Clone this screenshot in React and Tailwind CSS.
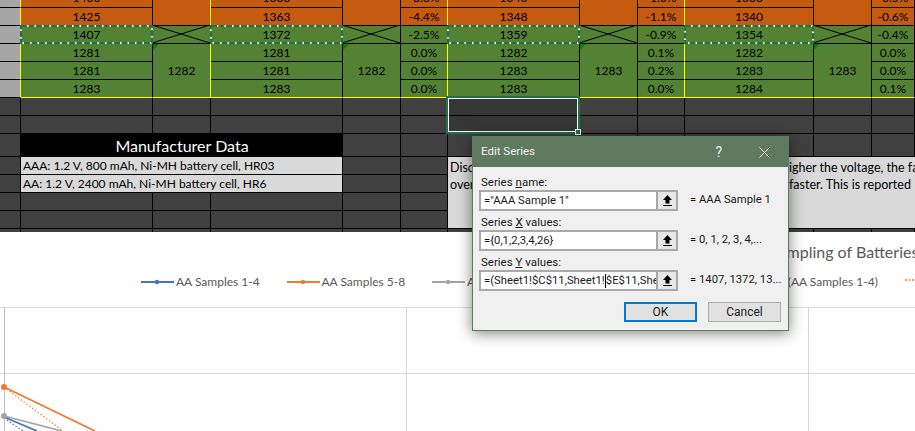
const ORANGE = "bg-[#c55a11]";
const GREEN = "bg-[#548235]";

const rows = [
  { bg: ORANGE, vals: ["1400", "1333", "-3.8%", "1340", "-1.0%", "1333", "-0.5%"] },
  { bg: ORANGE, vals: ["1425", "1363", "-4.4%", "1348", "-1.1%", "1340", "-0.6%"] },
  { bg: GREEN, vals: ["1407", "1372", "-2.5%", "1359", "-0.9%", "1354", "-0.4%"], ants: true },
  { bg: GREEN, vals: ["1281", "1281", "0.0%", "1282", "0.1%", "1282", "0.0%"] },
  { bg: GREEN, vals: ["1281", "1281", "0.0%", "1283", "0.2%", "1283", "0.0%"] },
  { bg: GREEN, vals: ["1283", "1283", "0.0%", "1283", "0.0%", "1284", "0.1%"], last: true },
];

// average shown in the merged column following each pair
const averages = ["1282", "1282", "1283", "1283"];

const Marching = ({ w }) => (
  <svg width={w} height="19" className="absolute -left-px -top-px z-10">
    <rect x="1" y="1" width={w - 2} height="17" fill="none" stroke="#fff" strokeWidth="2" />
    <rect x="1" y="1" width={w - 2} height="17" fill="none" stroke="#217346" strokeWidth="2" strokeDasharray="6 1.5" />
  </svg>
);

const Crossed = () => (
  <svg className="absolute -left-px -top-px z-0 w-[calc(100%+1px)] h-[19px]" viewBox="0 0 58 19" preserveAspectRatio="none">
    <path d="M0 0L58 18M0 18L58 0" stroke="#000" strokeWidth="1" fill="none" />
  </svg>
);

const ErrorMark = () => (
  <svg width="6" height="6" className="absolute left-0 top-0">
    <polygon points="0,0 6,0 0,6" fill="#0a7d0a" />
  </svg>
);

function Cell({ children, className = "" }) {
  return (
    <div className={`relative flex items-center justify-center border-r border-b border-black ${className}`}>
      {children}
    </div>
  );
}

function DataRow({ row, index }) {
  const edge = row.last ? "border-b-[#ffff00]" : "";
  const cell = `${row.bg} ${edge}`;
  const [a, b, c, d, e, f, g] = row.vals;

  const merged = (i) => {
    if (index === 0) return <Cell className={`${ORANGE} row-span-2 ${i === 0 ? "border-r-[#ffff00]" : ""}`} />;
    if (index === 2) {
      return (
        <Cell className={`${GREEN} ${i === 0 ? "border-r-[#ffff00]" : ""}`}>
          <Crossed />
        </Cell>
      );
    }
    if (index === 3) {
      return (
        <Cell className={`${GREEN} row-span-3 border-b-[#ffff00] ${i === 0 ? "border-r-[#ffff00]" : ""}`}>
          <ErrorMark />
          {averages[i]}
        </Cell>
      );
    }
    return null;
  };

  return (
    <>
      <Cell className="bg-[#a6a6a6] border-r-[#ffff00]" />
      <Cell className={cell}>{row.ants && <Marching w={133} />}{a}</Cell>
      {merged(0)}
      <Cell className={cell}>{row.ants && <Marching w={133} />}{b}</Cell>
      {merged(1)}
      <Cell className={`${cell} border-r-[#ffff00]`}>{c}</Cell>
      <Cell className={cell}>{row.ants && <Marching w={133} />}{d}</Cell>
      {merged(2)}
      <Cell className={`${cell} border-r-[#ffff00]`}>{e}</Cell>
      <Cell className={cell}>{row.ants && <Marching w={130} />}{f}</Cell>
      {merged(3)}
      <Cell className={cell}>{g}</Cell>
    </>
  );
}

const Dark = ({ className = "" }) => <Cell className={`bg-[#404040] ${className}`} />;

const DarkRow = () => (
  <>
    {Array.from({ length: 12 }, (_, i) => (
      <Dark key={i} />
    ))}
  </>
);

function Sheet() {
  return (
    <div className="h-[232px] overflow-hidden bg-[#404040]">
      <div className="relative -mt-[11px] grid grid-cols-[21px_132px_58px_132px_58px_47px_132px_58px_47px_129px_58px_43px] grid-rows-[19px_18px_18px_18px_18px_18px_18px_18px_23px_18px_18px_18px_18px_18px] text-[12px] leading-none text-black">
        {rows.map((row, i) => (
          <DataRow key={i} row={row} index={i} />
        ))}
        <DarkRow />
        <DarkRow />

        <Dark />
        <div className="col-span-3 flex items-center justify-center bg-black text-[16px] text-white">Manufacturer Data</div>
        <Dark />
        <Dark />
        <Dark />
        <Dark />
        <Dark />
        <Dark />
        <Dark />
        <Dark />

        <Dark />
        <div className="col-span-3 flex items-center border-r border-b border-black bg-[#d9d9d9] pl-[2px]">AAA: 1.2 V, 800 mAh, Ni-MH battery cell, HR03</div>
        <Dark />
        <Dark />
        <div className="col-span-6 row-span-4 overflow-hidden whitespace-nowrap border-b border-black bg-[#d9d9d9] pl-[2px] pt-[2px] text-[12.5px] leading-[17px]">
          <div className="flex">
            <span className="w-[332px] shrink-0">Discharge</span>
            <span>higher the voltage, the fa</span>
          </div>
          <div className="flex">
            <span className="w-[339px] shrink-0">over</span>
            <span>faster. This is reported</span>
          </div>
        </div>

        <Dark />
        <div className="col-span-3 flex items-center border-r border-b border-black bg-[#d9d9d9] pl-[2px]">AA: 1.2 V, 2400 mAh, Ni-MH battery cell, HR6</div>
        <Dark />
        <Dark />

        {[0, 1].map((r) => (
          <div key={r} className="contents">
            <Dark />
            <Dark />
            <Dark />
            <Dark />
            <Dark />
            <Dark />
          </div>
        ))}

        <DarkRow />

        {/* selected range */}
        <div className="absolute left-[446px] top-[107px] h-[38px] w-[134px] border-2 border-[#217346]">
          <div className="h-full w-full border border-white bg-black/15" />
          <div className="absolute -bottom-[3px] -right-[3px] h-[6px] w-[6px] border border-white bg-[#217346]" />
        </div>
      </div>
    </div>
  );
}

const LegendKey = ({ color }) => (
  <svg width="33" height="6" className="mr-[2px] shrink-0">
    <line x1="0" y1="3" x2="33" y2="3" stroke={color} strokeWidth="2" />
    <circle cx="16" cy="3" r="2.2" fill={color} />
  </svg>
);

function Chart() {
  return (
    <div className="h-[199px] overflow-hidden bg-white text-[#595959]">
      <div className="h-[37px] whitespace-nowrap pl-[770px] pt-[10px] text-[16px] leading-5">Sampling of Batteries</div>
      <div className="flex h-[38px] items-start whitespace-nowrap pl-[141px] pt-[5px] text-[12px] leading-[15px]">
        <div className="flex w-[146px] items-center"><LegendKey color="#4472c4" />AA Samples 1-4</div>
        <div className="flex w-[146px] items-center"><LegendKey color="#ed7d31" />AA Samples 5-8</div>
        <div className="flex w-[146px] items-center"><LegendKey color="#a5a5a5" />AAA Samples 1-4</div>
        <div className="ml-[175px] w-[153px]">Linear (AA Samples 1-4)</div>
        <svg width="10" height="15" className="shrink-0">
          <line x1="0" y1="6" x2="10" y2="6" stroke="#ed7d31" strokeWidth="1.5" strokeDasharray="2 1.5" />
        </svg>
      </div>
      <svg width="915" height="124" className="block">
        <path d="M0 0.5H915M0 66.5H915M406.5 0V124M808.5 0V124" stroke="#d9d9d9" fill="none" />
        <path d="M4.5 0V124" stroke="#bfbfbf" fill="none" />
        <line x1="4" y1="80" x2="95" y2="124" stroke="#ed7d31" strokeWidth="1.8" />
        <line x1="4" y1="80" x2="63" y2="124" stroke="#ed7d31" strokeWidth="1.2" strokeDasharray="1.5 2" />
        <line x1="4" y1="109" x2="62" y2="124" stroke="#a5a5a5" strokeWidth="1.8" />
        <line x1="4" y1="110" x2="37" y2="124" stroke="#4472c4" strokeWidth="1.8" />
        <line x1="4" y1="111" x2="23" y2="124" stroke="#4472c4" strokeWidth="1.2" strokeDasharray="1.5 2" />
        <circle cx="4" cy="80" r="3" fill="#ed7d31" />
        <circle cx="4" cy="109" r="3" fill="#a5a5a5" />
      </svg>
    </div>
  );
}

const UploadButton = () => (
  <div className="flex h-full w-[20px] shrink-0 items-center justify-center border-l-2 border-[#a9a9a9] bg-[#e8e8e8]">
    <svg width="11" height="13" viewBox="0 0 11 13">
      <path d="M5.5 1L10 6H7.5V9.5H3.5V6H1Z" fill="#000" />
      <rect x="1" y="11" width="9" height="1" fill="#000" />
    </svg>
  </div>
);

function SeriesField({ label, children, result }) {
  return (
    <div>
      <div className="h-[19px] pl-[2px] text-[11.5px] leading-[22px] text-[#1a1a1a]">{label}</div>
      <div className="flex items-center">
        <div className="flex h-[21px] w-[199px] shrink-0 items-center border-2 border-[#a9a9a9] bg-white">
          <div className="min-w-0 flex-1 overflow-hidden whitespace-nowrap pl-[3px] text-[11.3px] leading-none text-[#1a1a1a]">{children}</div>
          <UploadButton />
        </div>
        <div className="ml-[12px] whitespace-nowrap text-[11.3px] text-[#1a1a1a]">{result}</div>
      </div>
    </div>
  );
}

function Dialog() {
  return (
    <div className="absolute left-[472px] top-[136px] h-[195px] w-[317px] border border-[#5f7a60] bg-[#f0f0f0] font-[Roboto,sans-serif] shadow-[0_2px_14px_rgba(0,0,0,0.5)]">
      <div className="flex h-[30px] items-center justify-between bg-[#5f7a60] pl-[8px] pr-[18px] text-[11.5px] text-[#eef2ee]">
        <span>Edit Series</span>
        <div className="flex items-center gap-[37px]">
          <span className="text-[14px]">?</span>
          <svg width="11" height="11">
            <path d="M0.5 0.5L10.5 10.5M10.5 0.5L0.5 10.5" stroke="#eef2ee" fill="none" />
          </svg>
        </div>
      </div>
      <div className="px-[6px] pt-[4px]">
        <SeriesField label={<>Series <u>n</u>ame:</>} result="= AAA Sample 1">="AAA Sample 1"</SeriesField>
        <SeriesField label={<>Series <u>X</u> values:</>} result="= 0, 1, 2, 3, 4,...">={"{"}0,1,2,3,4,26{"}"}</SeriesField>
        <SeriesField label={<>Series <u>Y</u> values:</>} result="= 1407, 1372, 13...">
          =(Sheet1!$C$11,Sheet1!<span className="inline-block h-[14px] w-px bg-black align-middle" />$E$11,Sheet1!$G$11
        </SeriesField>
        <div className="mt-[11px] flex justify-end gap-[11px] pr-[1px] text-[12px] text-[#1a1a1a]">
          <button className="flex h-[20px] w-[73px] items-center justify-center border-2 border-[#0078d7] bg-[#e1e1e1]">OK</button>
          <button className="flex h-[20px] w-[73px] items-center justify-center border border-[#adadad] bg-[#e1e1e1]">Cancel</button>
        </div>
      </div>
    </div>
  );
}

export default function App() {
  return (
    <div className="relative h-[431px] w-[915px] overflow-hidden font-[Lato,sans-serif]">
      <Sheet />
      <Chart />
      <Dialog />
    </div>
  );
}
